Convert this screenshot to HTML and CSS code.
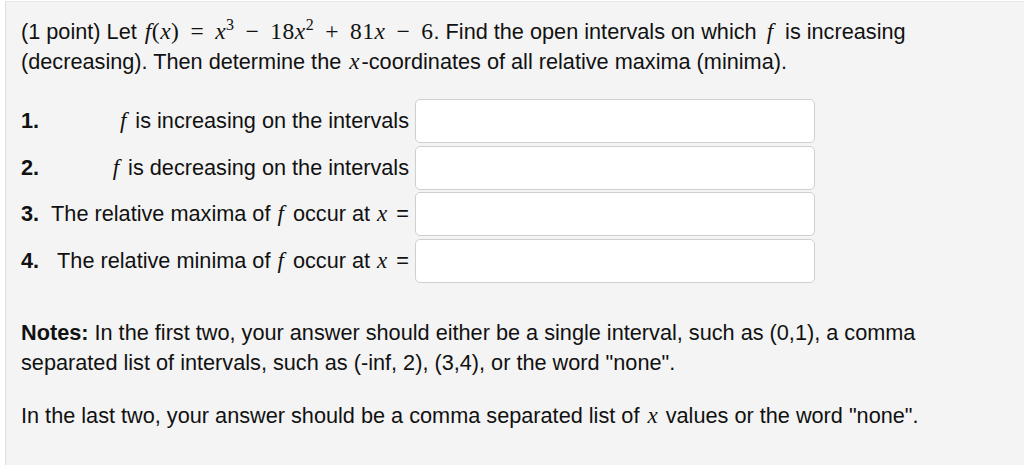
FILE: index.html
```html
<!DOCTYPE html>
<html lang="en">
<head>
    <meta charset="UTF-8">
    <meta name="viewport" content="width=device-width, initial-scale=1.0">
    <title>Problem: increasing and decreasing intervals</title>
    <link rel="stylesheet" href="styles.css">
</head>
<body>
    <div class="problem">
        <p class="intro">
            (1 point) Let <span class="math"><i>f</i>(<i>x</i>)<span class="op">=</span><i>x</i><sup>3</sup><span class="op">&minus;</span>18<i>x</i><sup>2</sup><span class="op">+</span>81<i>x</i><span class="op">&minus;</span>6</span>. Find the open intervals on which <i class="mv wide">f</i> is increasing<br>
            (decreasing). Then determine the <i class="mv">x</i>-coordinates of all relative maxima (minima).
        </p>

        <div class="answers">
            <b class="num">1.</b>
            <span class="label"><i class="mv">f</i> is increasing on the intervals</span>
            <input class="answer" type="text">

            <b class="num">2.</b>
            <span class="label"><i class="mv">f</i> is decreasing on the intervals</span>
            <input class="answer" type="text">

            <b class="num">3.</b>
            <span class="label">The relative maxima of <i class="mv">f</i> occur at <i class="mv">x</i> =</span>
            <input class="answer" type="text">

            <b class="num">4.</b>
            <span class="label">The relative minima of <i class="mv">f</i> occur at <i class="mv">x</i> =</span>
            <input class="answer" type="text">
        </div>

        <p class="notes">
            <b>Notes:</b> In the first two, your answer should either be a single interval, such as (0,1), a comma<br>
            separated list of intervals, such as (-inf, 2), (3,4), or the word "none".
        </p>
        <p class="notes">
            In the last two, your answer should be a comma separated list of <i class="mv">x</i> values or the word "none".
        </p>
    </div>
</body>
</html>
```

FILE: styles.css
```css
body {
    margin: 0;
    background: #fff;
    color: #111;
    font-family: "Liberation Sans", Arial, sans-serif;
    font-size: 21.7px;
    line-height: 30px;
}

.problem {
    margin: 1px 0 0 5px;
    min-height: 464px;
    padding: 15px 16px 0 15px;
    background: #f4f4f4;
    border-left: 1px solid #dedede;
    border-top: 1px solid #e6e6e6;
    box-sizing: border-box;
}

p {
    margin: 0;
}

.math {
    font-family: "Liberation Serif", "Times New Roman", serif;
    font-size: 23.5px;
    line-height: 1;
    padding-left: 2px;
    letter-spacing: 0.5px;
}

.math .op {
    padding: 0 11px;
}

.math sup {
    font-size: 16px;
    line-height: 0;
    vertical-align: 9px;
}

.mv {
    font-family: "Liberation Serif", "Times New Roman", serif;
    font-size: 23px;
    line-height: 1;
    padding-left: 2px;
    padding-right: 2px;
}

.mv.wide {
    padding-left: 4px;
    padding-right: 6px;
}

.label .mv {
    padding-left: 1px;
    padding-right: 3px;
}

.answers {
    display: grid;
    grid-template-columns: auto auto 400px;
    grid-auto-rows: 44px;
    row-gap: 2.67px;
    align-items: center;
    justify-content: start;
    margin-top: 22px;
}

.num {
    padding-right: 12px;
}

.label {
    text-align: right;
    padding-right: 6px;
}

.answer {
    height: 44px;
    width: 400px;
    margin: 0;
    border: 1px solid #cfcfcf;
    border-radius: 5px;
    background: #fff;
    box-sizing: border-box;
    font: inherit;
    padding: 0 8px;
}

.notes {
    margin-top: 35px;
}

.notes + .notes {
    margin-top: 23px;
}
```
